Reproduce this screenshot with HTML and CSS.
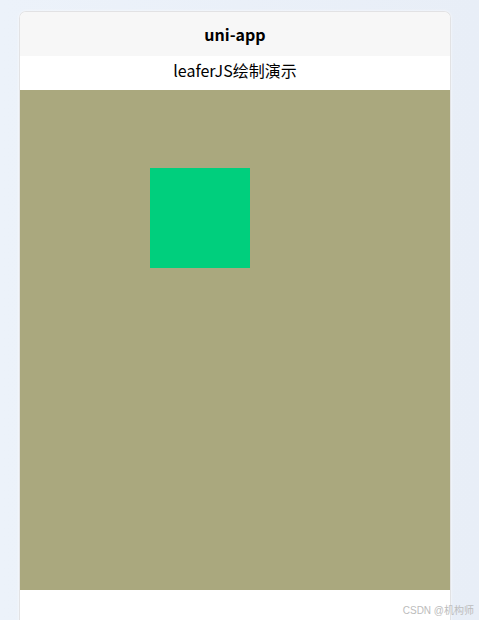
FILE: index.html
```html
<!DOCTYPE html>
<html lang="zh">
<head>
<meta charset="utf-8">
<link rel="stylesheet" href="styles.css">
</head>
<body>
<div class="page">
  <div class="phone">
    <div class="navbar">uni-app</div>
    <div class="subtitle">leaferJS绘制演示</div>
    <div class="canvas">
      <div class="rect"></div>
    </div>
    <div class="footer"></div>
  </div>
  <div class="watermark">CSDN @机构师</div>
</div>
</body>
</html>
```
FILE: styles.css
```css
html, body {
  margin: 0;
  padding: 0;
}
body {
  width: 479px;
  height: 620px;
  overflow: hidden;
  background: linear-gradient(90deg, #ecf2fa 0%, #e8eef7 100%);
  font-family: "Noto Sans CJK SC", "Noto Sans", sans-serif;
}
.page {
  position: relative;
  height: 620px;
  padding: 11px 0 0 19px;
  box-sizing: border-box;
}
.phone {
  width: 432px;
  height: 620px;
  background: #ffffff;
  border: 1px solid #e2e2e4;
  border-bottom: none;
  border-radius: 7px 7px 0 0;
  box-shadow: 0 0 3px rgba(255, 255, 255, 0.8);
  overflow: hidden;
  box-sizing: border-box;
  display: flex;
  flex-direction: column;
}
.navbar {
  height: 44px;
  flex: none;
  background: #f7f7f7;
  display: flex;
  align-items: center;
  justify-content: center;
  font-size: 16px;
  font-weight: 700;
  color: #000;
}
.subtitle {
  height: 34px;
  flex: none;
  display: flex;
  align-items: center;
  justify-content: center;
  padding-bottom: 6px;
  box-sizing: border-box;
  font-size: 16px;
  color: #000;
}
.canvas {
  height: 500px;
  flex: none;
  background: #aaa87e;
  padding: 78px 0 0 130px;
  box-sizing: border-box;
}
.rect {
  width: 100px;
  height: 100px;
  background: #00cf7d;
}
.footer {
  flex: 1;
  background: #ffffff;
}
.watermark {
  position: absolute;
  right: 5px;
  bottom: 3px;
  font-size: 10px;
  color: #bcbcbc;
  font-family: "Liberation Sans", "Noto Sans CJK SC", sans-serif;
}
```
